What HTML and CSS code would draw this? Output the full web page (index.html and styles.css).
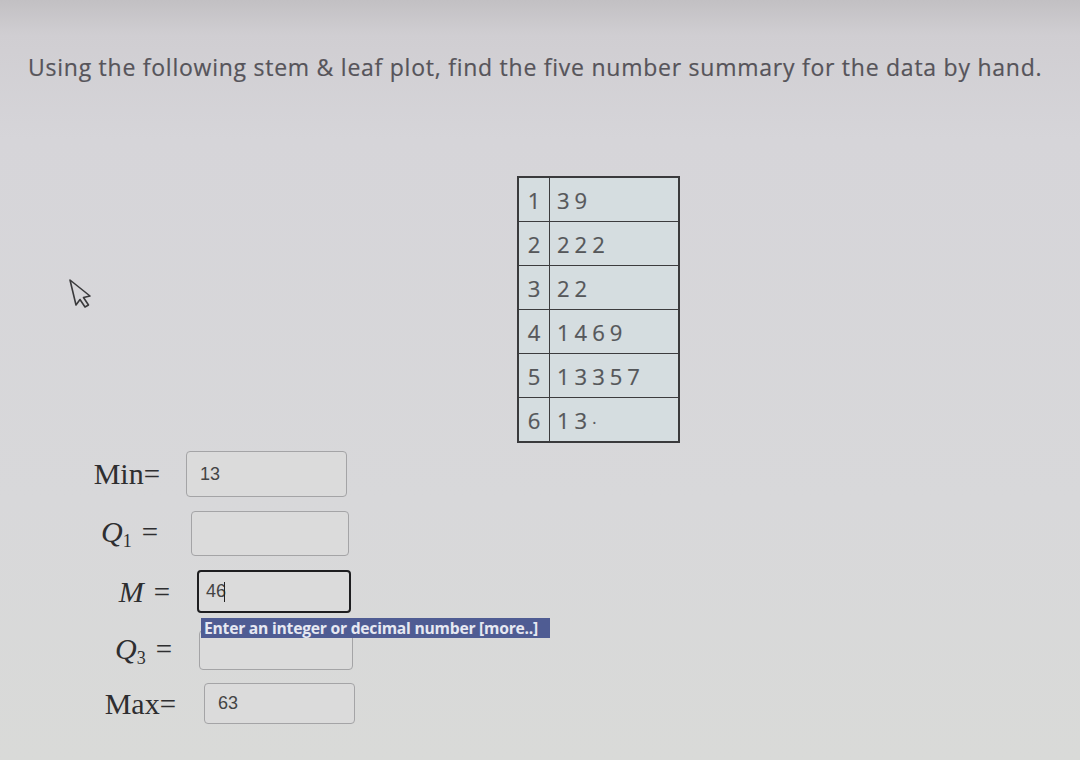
FILE: index.html
```html
<!DOCTYPE html>
<html>
<head>
<meta charset="utf-8">
<link rel="stylesheet" href="styles.css">
</head>
<body>
<div class="page">
  <p class="question">Using the following stem &amp; leaf plot, find the five number summary for the data by hand.</p>

  <div class="plot-wrap">
    <table class="plot">
      <tr><td class="stem">1</td><td class="leaf">39</td></tr>
      <tr><td class="stem">2</td><td class="leaf">222</td></tr>
      <tr><td class="stem">3</td><td class="leaf">22</td></tr>
      <tr><td class="stem">4</td><td class="leaf">1469</td></tr>
      <tr><td class="stem">5</td><td class="leaf">13357</td></tr>
      <tr><td class="stem">6</td><td class="leaf">13<span class="dot">·</span></td></tr>
    </table>
  </div>

  <svg class="cursor" width="40" height="40" viewBox="0 0 40 40">
    <path d="M10 5 L16 30 L20 24.5 L25 32 L28.5 30 L23.5 22.5 L30 21 Z" fill="none" stroke="#3a3a3c" stroke-width="1.6" stroke-linejoin="round"/>
  </svg>

  <div class="form">
    <div class="row r1">
      <span class="label"><span class="rm">Min</span>=</span>
      <div class="field">13</div>
    </div>
    <div class="row r2">
      <span class="label"><i>Q</i><sub>1</sub><span class="eq">=</span></span>
      <div class="field"></div>
    </div>
    <div class="row r3">
      <span class="label"><i>M</i><span class="eq">=</span></span>
      <div class="field focused">46<span class="caret"></span>
        <div class="tip">Enter an integer or decimal number [more..]</div>
      </div>
    </div>
    <div class="row r4">
      <span class="label"><i>Q</i><sub>3</sub><span class="eq">=</span></span>
      <div class="field"></div>
    </div>
    <div class="row r5">
      <span class="label"><span class="rm">Max</span>=</span>
      <div class="field">63</div>
    </div>
  </div>
</div>
</body>
</html>
```
FILE: styles.css
```css
html, body {
  margin: 0;
  padding: 0;
}
body {
  width: 1080px;
  height: 760px;
  overflow: hidden;
  background: linear-gradient(180deg, #c2c0c3 0px, #d0ced2 35px, #d6d5d9 140px, #d8d8da 500px, #d9dad8 760px);
  font-family: "Open Sans", "Noto Sans", sans-serif;
}
.page {
  position: relative;
  height: 760px;
}
.question {
  margin: 0;
  padding: 52px 0 0 28px;
  font-size: 23px;
  color: #56545a;
  letter-spacing: 0.75px;
  line-height: 30px;
  white-space: nowrap;
  -webkit-text-stroke: 0.2px #56545a;
}
.plot-wrap {
  margin: 94px 0 0 517px;
}
.plot {
  border-collapse: collapse;
  border: 2px solid #3a3a3c;
  background: #d5dde0;
}
.plot td {
  border: 1.5px solid #3c3c3e;
  height: 43px;
  padding: 0;
  font-family: "Open Sans", "Noto Sans", sans-serif;
  font-size: 22px;
  color: #55575a;
  letter-spacing: 5px;
  -webkit-text-stroke: 0.2px #55575a;
}
.plot .stem {
  width: 30px;
  text-align: center;
  letter-spacing: 0;
}
.plot .leaf {
  width: 121px;
  padding-left: 7px;
}
.dot {
  font-size: 16px;
}
.cursor {
  position: absolute;
  left: 60px;
  top: 275px;
}
.form {
  margin-top: 8px;
  display: flex;
  flex-direction: column;
}
.row {
  display: flex;
  align-items: center;
}
.label {
  width: 80px;
  text-align: right;
  font-family: "Liberation Serif", "DejaVu Serif", serif;
  font-size: 29px;
  color: #2e2e30;
  white-space: nowrap;
}
.label .rm {
  font-size: 30px;
}
.label i {
  font-size: 30px;
}
.label sub {
  font-size: 18px;
  vertical-align: -5px;
}
.label .eq {
  margin-left: 10px;
}
.r1 { padding-left: 80px; height: 46px; }
.r2 { padding-left: 78px; height: 45px; margin-top: 14px; }
.r3 { padding-left: 90px; height: 43px; margin-top: 14px; }
.r4 { padding-left: 92px; height: 40px; margin-top: 17px; }
.r5 { padding-left: 96px; height: 41px; margin-top: 13px; }
.r1 .label { margin-right: 26px; }
.r2 .label { margin-right: 33px; }
.r3 .label { margin-right: 27px; }
.r4 .label { margin-right: 27px; }
.r5 .label { margin-right: 28px; }
.field {
  position: relative;
  box-sizing: border-box;
  width: 161px;
  height: 100%;
  border: 1px solid #a4a4a6;
  border-radius: 4px;
  background: #dbdbdb;
  font-family: "Liberation Sans", "Open Sans", sans-serif;
  font-size: 18px;
  color: #444;
  padding-left: 13px;
  display: flex;
  align-items: center;
}
.r2 .field { width: 158px; }
.r3 .field { width: 154px; }
.r4 .field { width: 154px; }
.r5 .field { width: 151px; }
.field.focused {
  border: 2px solid #1e1e20;
  padding-left: 7px;
}
.caret {
  display: inline-block;
  width: 1px;
  height: 20px;
  background: #222;
  margin-left: -2px;
}
.tip {
  position: absolute;
  left: 2px;
  top: 46px;
  width: 349px;
  height: 20px;
  box-sizing: border-box;
  background: #4f5c93;
  color: #e6e8f2;
  font-family: "Open Sans", sans-serif;
  font-weight: 700;
  font-size: 15.7px;
  line-height: 20px;
  padding-left: 3px;
  white-space: nowrap;
  letter-spacing: -0.25px;
  z-index: 2;
}
```
